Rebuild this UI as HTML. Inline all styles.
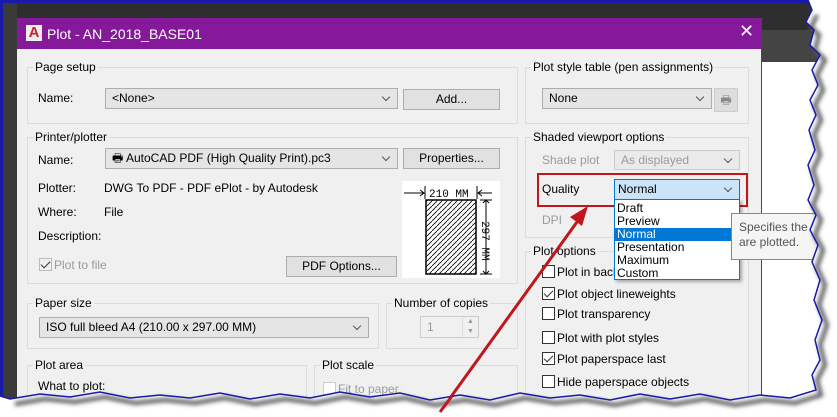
<!DOCTYPE html>
<html><head><meta charset="utf-8"><style>
*{margin:0;padding:0;box-sizing:border-box}
body{width:837px;height:417px;overflow:hidden;position:relative;background:#fff;font-family:"Liberation Sans",sans-serif;font-size:12px;color:#000}
.a{position:absolute}
.t{position:absolute;white-space:nowrap;line-height:14px}
.g{position:absolute;border:1px solid #dcdcdc}
.gl{position:absolute;background:#f0f0f0;padding:0 2px;line-height:14px;white-space:nowrap}
.cb{position:absolute;background:#e5e5e5;border:1px solid #adadad;line-height:18px;padding-left:6px;white-space:nowrap}
.cb:after{content:"";position:absolute;right:8px;top:5px;width:5px;height:5px;border-right:1px solid #555;border-bottom:1px solid #555;transform:rotate(45deg)}
.bt{position:absolute;background:#e1e1e1;border:1px solid #adadad;text-align:center;line-height:18px}
.ck{position:absolute;width:13px;height:13px;border:1px solid #333;background:#fff}
.ck.on:after{content:"";position:absolute;left:3px;top:0;width:4px;height:8px;border-right:1.5px solid #333;border-bottom:1.5px solid #333;transform:rotate(45deg)}
.gr{color:#9a9a9a}
</style></head><body>
<div class="a" style="left:0;top:0;width:837px;height:62px;background:#2e2e2e"></div>
<div class="a" style="left:0;top:0;width:808px;height:3px;background:#1a1aa8"></div>
<div class="a" style="left:0;top:0;width:3px;height:400px;background:#1a1aa8"></div>
<div class="a" style="left:3px;top:3px;width:14px;height:400px;background:#3a3a3a"></div>
<div class="a" style="left:761px;top:30px;width:60px;height:32px;background:#444"></div>
<div class="a" style="left:761px;top:62px;width:60px;height:340px;background:#fff"></div>
<div class="a" style="left:17px;top:18px;width:745px;height:390px;background:#f0f0f0;border-right:1px solid #8a1a9a"></div>
<div class="a" style="left:17px;top:18px;width:745px;height:31px;background:#86199a"></div>
<div class="a" style="left:26px;top:25px;width:16px;height:16px;background:#eee;color:#c8242b;font-weight:bold;font-size:15px;line-height:16px;text-align:center">A</div>
<div class="t" style="left:47px;top:26px;color:#fff;font-size:14px;line-height:16px">Plot - AN_2018_BASE01</div>
<div class="t" style="left:739px;top:24px;color:#fff;font-size:18px">✕</div>

<div class="g" style="left:27px;top:67px;width:491px;height:57px"></div>
<div class="gl" style="left:33px;top:60px">Page setup</div>
<div class="t" style="left:38px;top:91px">Name:</div>
<div class="cb" style="left:105px;top:88px;width:293px;height:21px">&lt;None&gt;</div>
<div class="bt" style="left:403px;top:89px;width:97px;height:21px">Add...</div>

<div class="g" style="left:27px;top:137px;width:491px;height:147px"></div>
<div class="gl" style="left:33px;top:130px">Printer/plotter</div>
<div class="t" style="left:38px;top:153px">Name:</div>
<div class="cb" style="left:105px;top:148px;width:293px;height:21px">🖶 AutoCAD PDF (High Quality Print).pc3</div>
<div class="bt" style="left:403px;top:148px;width:97px;height:21px">Properties...</div>
<div class="t" style="left:38px;top:181px">Plotter:</div>
<div class="t" style="left:104px;top:181px">DWG To PDF - PDF ePlot - by Autodesk</div>
<div class="t" style="left:38px;top:205px">Where:</div>
<div class="t" style="left:104px;top:205px">File</div>
<div class="t" style="left:38px;top:229px">Description:</div>
<div class="ck on" style="left:39px;top:258px;border-color:#bbb;background:#f0f0f0"></div>
<div class="t gr" style="left:54px;top:258px">Plot to file</div>
<div class="bt" style="left:286px;top:256px;width:111px;height:21px">PDF Options...</div>
<div class="a" style="left:402px;top:181px;width:98px;height:97px;background:#fff"></div>
<svg class="a" style="left:402px;top:181px" width="98" height="97">
<defs><pattern id="h" width="5" height="5" patternUnits="userSpaceOnUse"><path d="M0 5L5 0" stroke="#000" stroke-width="0.8"/></pattern></defs>
<rect x="24" y="19" width="50" height="74" fill="url(#h)" stroke="#000" stroke-width="1.5"/>
<path d="M2 12H22M18 9L22 12L18 15M23 5V18M76 12H90M80 9L76 12L80 15M75 5V18M78 19H90M84 19V93M78 93H90M81 22L84 19L87 22M81 90L84 93L87 90" stroke="#000" fill="none"/>
<text x="27" y="16" font-family="Liberation Mono" font-size="11">210 MM</text>
<text x="80" y="40" font-family="Liberation Mono" font-size="11" transform="rotate(90 80 40)">297 MM</text>
</svg>

<div class="g" style="left:27px;top:303px;width:352px;height:46px"></div>
<div class="gl" style="left:33px;top:296px">Paper size</div>
<div class="cb" style="left:39px;top:317px;width:330px;height:21px">ISO full bleed A4 (210.00 x 297.00 MM)</div>
<div class="g" style="left:386px;top:303px;width:132px;height:46px"></div>
<div class="gl" style="left:392px;top:296px">Number of copies</div>
<div class="a" style="left:420px;top:316px;width:59px;height:22px;border:1px solid #ccc;background:#f0f0f0;color:#999;padding:3px 6px">1</div>
<div class="a" style="left:462px;top:317px;width:16px;height:20px;border-left:1px solid #ddd;color:#999;font-size:7px;line-height:10px;text-align:center">▲<br>▼</div>
<div class="g" style="left:27px;top:365px;width:280px;height:50px"></div>
<div class="gl" style="left:33px;top:358px">Plot area</div>
<div class="t" style="left:38px;top:379px">What to plot:</div>
<div class="g" style="left:314px;top:365px;width:204px;height:50px"></div>
<div class="gl" style="left:320px;top:358px">Plot scale</div>
<div class="ck" style="left:323px;top:382px;border-color:#ccc"></div>
<div class="t gr" style="left:338px;top:382px">Fit to paper</div>

<div class="g" style="left:525px;top:67px;width:224px;height:57px"></div>
<div class="gl" style="left:531px;top:60px">Plot style table (pen assignments)</div>
<div class="cb" style="left:542px;top:88px;width:170px;height:21px">None</div>
<div class="a" style="left:714px;top:88px;width:24px;height:24px;background:#ddd;border:1px solid #ccc;color:#888;text-align:center;line-height:22px">🖶</div>
<div class="g" style="left:525px;top:137px;width:224px;height:101px"></div>
<div class="gl" style="left:531px;top:130px">Shaded viewport options</div>
<div class="t gr" style="left:542px;top:153px">Shade plot</div>
<div class="cb gr" style="left:614px;top:150px;width:126px;height:20px;background:#eaeaea;border-color:#ccc">As displayed</div>
<div class="t" style="left:542px;top:182px">Quality</div>
<div class="cb" style="left:614px;top:179px;width:126px;height:21px;background:#cce4f7;border:1px solid #0078d7;padding-left:3px;line-height:19px">Normal</div>
<div class="a" style="left:537px;top:173px;width:211px;height:34px;border:2px solid #c0161c"></div>
<div class="t gr" style="left:542px;top:213px">DPI</div>
<div class="g" style="left:525px;top:251px;width:224px;height:165px"></div>
<div class="gl" style="left:531px;top:244px">Plot options</div>
<div class="ck" style="left:542px;top:265px"></div><div class="t" style="left:557px;top:265px">Plot in background</div>
<div class="ck on" style="left:542px;top:287px"></div><div class="t" style="left:557px;top:287px">Plot object lineweights</div>
<div class="ck" style="left:542px;top:307px"></div><div class="t" style="left:557px;top:307px">Plot transparency</div>
<div class="ck" style="left:542px;top:331px"></div><div class="t" style="left:557px;top:331px">Plot with plot styles</div>
<div class="ck on" style="left:542px;top:352px"></div><div class="t" style="left:557px;top:352px">Plot paperspace last</div>
<div class="ck" style="left:542px;top:375px"></div><div class="t" style="left:557px;top:375px">Hide paperspace objects</div>

<div class="a" style="left:614px;top:199px;width:126px;height:81px;background:#fff;border:1px solid #0078d7;line-height:13px;padding-top:2px;box-shadow:2px 2px 3px rgba(0,0,0,.3)">
<div style="padding-left:2px">Draft</div><div style="padding-left:2px">Preview</div>
<div style="padding-left:2px;background:#0078d7;color:#fff">Normal</div>
<div style="padding-left:2px">Presentation</div><div style="padding-left:2px">Maximum</div><div style="padding-left:2px">Custom</div></div>
<div class="a" style="left:731px;top:213px;width:100px;height:47px;background:#f5f5f5;border:1px solid #888;color:#555;padding:6px 7px;line-height:15px;white-space:nowrap;overflow:hidden">Specifies the re<br>are plotted.</div>

<svg class="a" style="left:0;top:0" width="837" height="417">
<defs><filter id="b"><feGaussianBlur stdDeviation="2"/></filter></defs>
<path d="M440 412L577 222" stroke="#c0161c" stroke-width="3"/>
<path d="M588 206L570 217L582 226Z" fill="#c0161c"/>
<path d="M808 0L812 10L806 22L814 30L810 45L820 55L812 70L818 85L810 100L816 115L809 130L815 150L808 165L814 185L808 200L816 215L810 230L818 245L812 262L820 280L814 300L822 320L815 340L820 360L812 375L816 390L790 398L760 395L730 400L700 394L670 399L640 394L610 400L580 395L550 398L520 393L490 400L460 395L430 400L400 393L370 397L340 392L310 398L280 394L250 399L220 393L190 398L160 395L130 398L100 392L70 397L40 394L10 399L0 396L0 417L837 417L837 0Z" fill="#fff"/>
<path d="M812 10L806 22L814 30L810 45L820 55L812 70L818 85L810 100L816 115L809 130L815 150L808 165L814 185L808 200L816 215L810 230L818 245L812 262L820 280L814 300L822 320L815 340L820 360L812 375L816 390L790 398L760 395L730 400L700 394L670 399L640 394L610 400L580 395L550 398L520 393L490 400L460 395L430 400L400 393L370 397L340 392L310 398L280 394L250 399L220 393L190 398L160 395L130 398L100 392L70 397L40 394L10 399" transform="translate(5,5)" stroke="#555" stroke-width="4" fill="none" filter="url(#b)"/>
<path d="M808 0L812 10L806 22L814 30L810 45L820 55L812 70L818 85L810 100L816 115L809 130L815 150L808 165L814 185L808 200L816 215L810 230L818 245L812 262L820 280L814 300L822 320L815 340L820 360L812 375L816 390L790 398L760 395L730 400L700 394L670 399L640 394L610 400L580 395L550 398L520 393L490 400L460 395L430 400L400 393L370 397L340 392L310 398L280 394L250 399L220 393L190 398L160 395L130 398L100 392L70 397L40 394L10 399L0 396" stroke="#1a1aa8" stroke-width="1.5" fill="none"/>
<path d="M440 412L452 396" stroke="#c0161c" stroke-width="3"/>
</svg>
</body></html>
